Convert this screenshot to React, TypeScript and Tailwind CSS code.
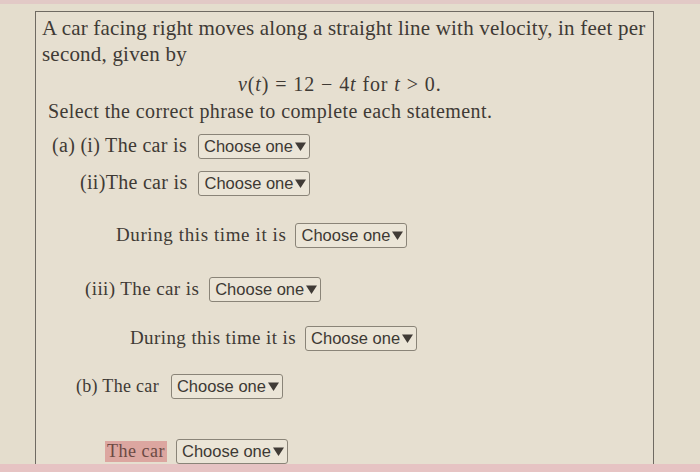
import React from "react";

function Choose({ className = "" }: { className?: string }) {
  return (
    <span
      className={`inline-flex items-center h-[25px] pl-[5px] pr-[3px] border border-[#8a8478] rounded-[3px] bg-[#ebe5d7] text-[16.5px] text-[#3d3934] [font-family:'Liberation_Sans',Arial,sans-serif] ${className}`}
    >
      Choose one
      <svg className="ml-[2px] w-[11px] h-[9px] self-center" viewBox="0 0 11 9">
        <path d="M0 0.5 H11 L5.5 9 Z" fill="#403b36" />
      </svg>
    </span>
  );
}

export default function App() {
  return (
    <div className="w-[700px] h-[472px] overflow-hidden bg-[#e4ddcd] flex flex-col [font-family:'Liberation_Serif','Times_New_Roman',serif] text-[#3f3a35]">
      <div className="h-[5px] bg-[#e2c9c6]" />
      <div className="flex-1 pl-[35px] pr-[46px] pt-[7px]">
        <div className="h-full border-l border-t border-r border-[#6f6a62] pl-[6px] bg-[#e6dfd0]">
          <p className="text-[21px] leading-[26px] tracking-[0.2px] mt-[3px]">
            A car facing right moves along a straight line with velocity, in feet per
            <br />
            second, given by
          </p>
          <p className="text-[20px] leading-[30px] tracking-[0.9px] pl-[196px] mt-[2px]">
            <i>v</i>(<i>t</i>) = 12 − 4<i>t</i> for <i>t</i> &gt; 0.
          </p>
          <p className="text-[20px] leading-[26px] tracking-[0.4px] pl-[6px] -mt-[1px]">
            Select the correct phrase to complete each statement.
          </p>

          <div className="flex items-baseline gap-[11px] pl-[10px] mt-[6px]">
            <span className="text-[20px] leading-[30px] tracking-[0.3px]">(a) (i) The car is</span>
            <Choose />
          </div>
          <div className="flex items-baseline gap-[11px] pl-[38px] mt-[7px]">
            <span className="text-[20px] leading-[30px] tracking-[0.3px]">(ii)The car is</span>
            <Choose />
          </div>
          <div className="flex items-baseline gap-[9px] pl-[74px] mt-[23px]">
            <span className="text-[19px] leading-[30px] tracking-[0.6px]">During this time it is</span>
            <Choose />
          </div>
          <div className="flex items-baseline gap-[10px] pl-[43px] mt-[24px]">
            <span className="text-[19px] leading-[30px] tracking-[0.4px]">(iii) The car is</span>
            <Choose />
          </div>
          <div className="flex items-baseline gap-[9px] pl-[88px] mt-[19px]">
            <span className="text-[19px] leading-[30px] tracking-[0.4px]">During this time it is</span>
            <Choose />
          </div>
          <div className="flex items-baseline gap-[12px] pl-[34px] mt-[18px]">
            <span className="text-[18px] leading-[30px] tracking-[0.3px]">(b) The car</span>
            <Choose />
          </div>
          <div className="flex items-baseline gap-[9px] pl-[63px] mt-[38px]">
            <span className="text-[18px] leading-[21px] tracking-[0.5px] bg-[#dca6a0] text-[#6b4a44] px-[2px]">The car</span>
            <Choose />
          </div>
        </div>
      </div>
      <div className="h-[9px] bg-[#e6c3c3]" />
    </div>
  );
}
